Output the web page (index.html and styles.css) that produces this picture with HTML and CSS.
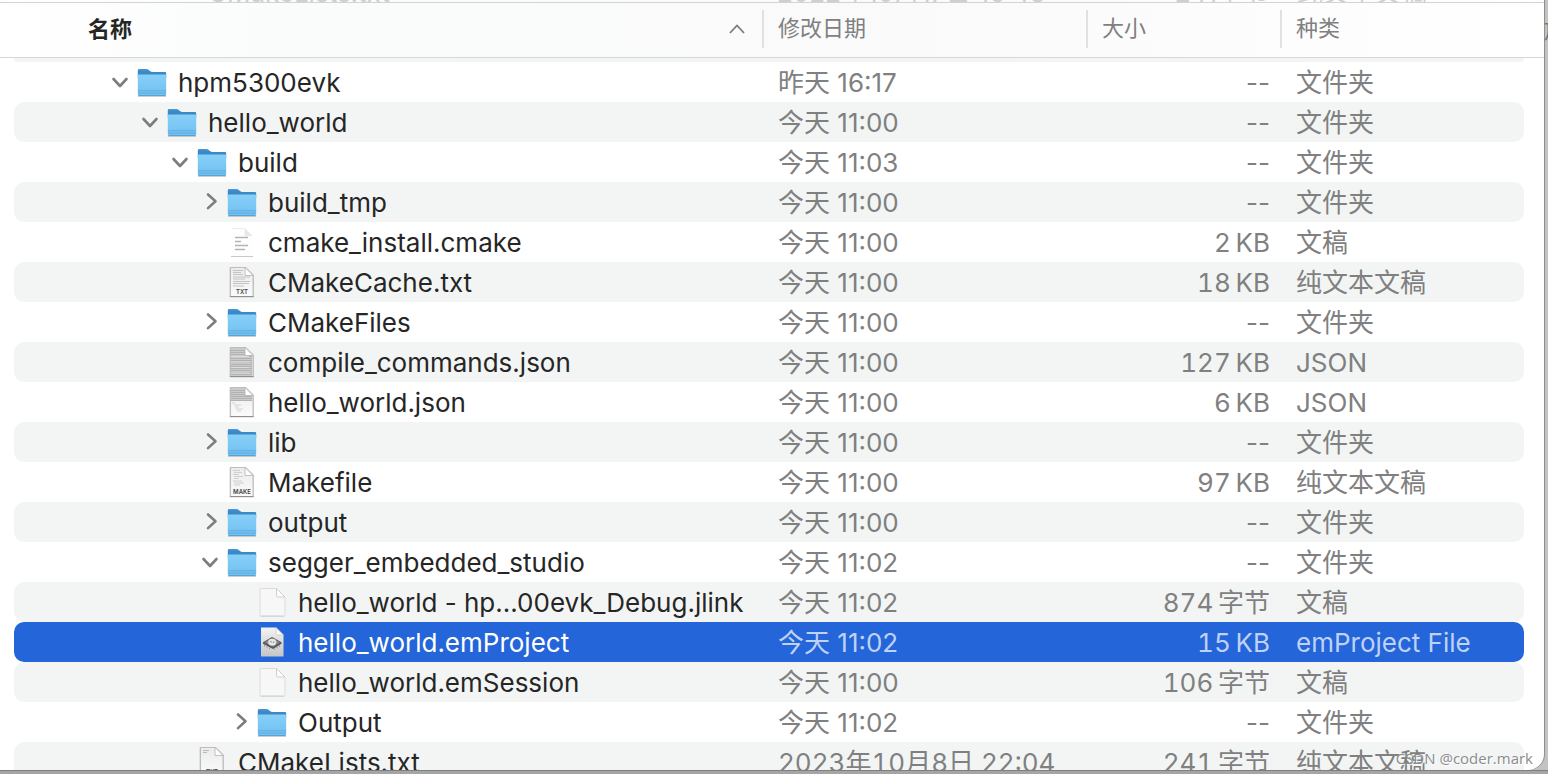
FILE: index.html
```html
<!DOCTYPE html>
<html lang="zh-CN">
<head>
    <meta charset="UTF-8">
    <meta name="viewport" content="width=device-width, initial-scale=1.0">
    <title>hpm5300evk</title>
    <link rel="stylesheet" href="styles.css">
</head>
<body>

<!-- Icon set -->
<svg class="defs" aria-hidden="true">
    <defs>
        <linearGradient id="folderBack" x1="0" y1="0" x2="0" y2="1">
            <stop offset="0" stop-color="#4a9bd6"/>
            <stop offset="0.3" stop-color="#3a88c6"/>
        </linearGradient>
        <linearGradient id="folderFront" x1="0" y1="0" x2="0" y2="1">
            <stop offset="0" stop-color="#86d0f8"/>
            <stop offset="1" stop-color="#72bff0"/>
        </linearGradient>
        <linearGradient id="paper" x1="0" y1="0" x2="0" y2="1">
            <stop offset="0" stop-color="#ececec"/>
            <stop offset="1" stop-color="#fbfbfb"/>
        </linearGradient>
        <linearGradient id="silver" x1="0" y1="0" x2="0" y2="1">
            <stop offset="0" stop-color="#f3f3f3"/>
            <stop offset="1" stop-color="#c3c5c8"/>
        </linearGradient>
        <pattern id="dense" width="5" height="2" patternUnits="userSpaceOnUse">
            <path d="M0 0.5h5" stroke="#b2b2b2" stroke-width="1"/>
        </pattern>

        <symbol id="folder" viewBox="0 0 32 32">
            <path d="M2 29.5h28v1.2H2z" fill="#8b9299" opacity="0.6"/>
            <path d="M1.8 4.2Q1.8 3 3 3h7.5q1.2 0 2 0.8l1.4 1.3q0.9 0.8 2 0.8h13q1.3 0 1.3 1.2V12H1.8z" fill="url(#folderBack)"/>
            <path d="M1.8 9.6Q1.8 8.6 3 8.6h26q1.2 0 1.2 1v18.6q0 1.6-1.4 1.6H3.2q-1.4 0-1.4-1.6z" fill="url(#folderFront)"/>
            <path d="M2 24.7h28M2 27h28" stroke="#4f9ed3" stroke-width="0.8" opacity="0.75"/>
            <path d="M2.5 29.5h27" stroke="#4b9bd1" stroke-width="0.8"/>
        </symbol>

        <symbol id="sheet" viewBox="0 0 32 32">
            <path d="M3.5 1.5h16.500l8 8v22H3.500z" fill="#777777" opacity="0.3"/>
            <path d="M4.5 1.5h15.500l7 7v22h-22.500z" fill="url(#paper)" stroke="#b3b3b3" stroke-width="0.8"/>
            <path d="M4 30.500h23.500" stroke="#8f8f8f"/>
        </symbol>
        <symbol id="fold" viewBox="0 0 32 32">
            <path d="M19 1.500l8 8h-8z" fill="#ffffff" stroke="#b3b3b3" stroke-width="0.8"/>
        </symbol>

        <symbol id="doc" viewBox="0 0 32 32">
            <path d="M5.500 2h14l7 7v21H5.500z" fill="#fefefe"/>
            <path d="M5.500 2.500h13" stroke="#ececec"/>
            <path d="M18.500 2l8 8h-6q-2 0-2-2z" fill="#e7e7e7"/>
            <path d="M5 30.500h22" stroke="#c9c9c9" stroke-width="1"/>
            <path d="M9 11.500h13M9 15.500h6M9 19.500h13M9 23.500h10" stroke="#b4b4b4" stroke-width="1.300"/>
        </symbol>

        <symbol id="txt" viewBox="0 0 32 32">
            <use href="#sheet"/>
            <path d="M7 4.500h10M7 6.500h8M7 8.500h10M7 11h17M7 13h12M7 15.500h17M7 17.500h16M7 20h11" stroke="#bdbdbd" stroke-width="0.900"/>
            <use href="#fold"/>
            <text x="16" y="28" class="badge">TXT</text>
        </symbol>

        <symbol id="lists" viewBox="0 0 32 32">
            <use href="#sheet"/>
            <path d="M7 4.500h6M7 6.500h4" stroke="#b2b2b2" stroke-width="0.900"/>
            <use href="#fold"/>
            <text x="16" y="28" class="badge">TXT</text>
        </symbol>

        <symbol id="make" viewBox="0 0 32 32">
            <use href="#sheet"/>
            <path d="M7 4.500h7M8 6.500h8M7 8.500h6M8 10.500h9M8 12.500h5M7 15h9M8 17h10M8 19h6" stroke="#cccccc" stroke-width="0.900"/>
            <use href="#fold"/>
            <text x="16" y="28" class="badge">MAKE</text>
        </symbol>

        <symbol id="jsonFull" viewBox="0 0 32 32">
            <use href="#sheet"/>
            <path d="M5 2h14l7.500 7.500v20.500H5z" fill="#cbcbcb"/>
            <path d="M5 3h14v6h7v21H5z" fill="url(#dense)"/>
            <path d="M5 10.500h18M5 16h19M5 21.500h18M5 27h19" stroke="#dddddd" stroke-width="1.200"/>
            <use href="#fold"/>
        </symbol>

        <symbol id="jsonHalf" viewBox="0 0 32 32">
            <use href="#sheet"/>
            <path d="M5 2h14l7.500 7.500v5.500H5z" fill="#cbcbcb"/>
            <path d="M5 3h14v6h7v6H5z" fill="url(#dense)"/>
            <path d="M6 17h3M8 19h7M9 21h4M10 23h7M11 25h4" stroke="#d0d0d0" stroke-width="0.900"/>
            <use href="#fold"/>
        </symbol>

        <symbol id="blank" viewBox="0 0 32 32">
            <path d="M4 2.500h16.500l8.500 8.500v17.500q0 1.500-1.500 1.500h-22q-1.500 0-1.500-1.500z" fill="#f7f7f7" stroke="#dcdcdc"/>
            <path d="M20.500 2.500l8.500 8.500h-7q-1.500 0-1.500-1.500z" fill="#fdfdfd" stroke="#cfcfcf"/>
            <path d="M4.500 30.200h24" stroke="#c9c9c9" stroke-width="0.800"/>
        </symbol>

        <symbol id="chip" viewBox="0 0 32 32">
            <path d="M5 1.500h15l7.500 7.500v21.500H5z" fill="url(#silver)"/>
            <path d="M20 1.500l7.500 7.500h-6q-1.500 0-1.500-1.500z" fill="#fafafa" stroke="#bdbdbd" stroke-width="0.600"/>
            <path d="M7 16.200l9-5.200 9.500 5.200v1.600l-8.500 5.200-10-5.200z" fill="#5b5957"/>
            <path d="M8.500 19v1.400M11 20.200v1.500M13.500 21.500v1.500M18.500 22.500v1.300M21 21v1.300M23.500 19.500v1.300" stroke="#a48460" stroke-width="0.900"/>
            <path d="M8.500 16.200l7.500-4.200 8 4.200-7 4.500z" fill="#8a8b8d"/>
            <ellipse cx="16.200" cy="16.200" rx="4" ry="3.400" fill="#e6e7e8"/>
            <circle cx="15" cy="15.800" r="0.700" fill="#777777"/>
            <circle cx="17.600" cy="16.200" r="0.700" fill="#777777"/>
        </symbol>

        <symbol id="down" viewBox="0 0 32 32">
            <path d="M9.500 13l6.500 7 6.500-7" class="stroke"/>
        </symbol>
        <symbol id="right" viewBox="0 0 32 32">
            <path d="M14 8.500l7.500 6.800-7.500 6.800" class="stroke"/>
        </symbol>
    </defs>
</svg>

<div class="desktop">
    <main class="window">
        <!-- Row scrolled under the header -->
        <div class="peek">
            <span class="peek-name">CMakeLists.txt</span>
            <span class="peek-date">2022年10月17日 16:48</span>
            <span class="peek-size">241字节</span>
            <span class="peek-kind">纯文本文稿</span>
        </div>

        <table class="files">
            <colgroup>
                <col>
                <col class="col-date">
                <col class="col-size">
                <col class="col-kind">
            </colgroup>
            <thead>
                <tr>
                    <th class="sorted">
                        <button class="sort" type="button">名称
                            <svg width="18" height="12" viewBox="0 0 18 12" aria-hidden="true"><path d="M2 10l7-7.500 7 7.500" fill="none" stroke="#7b7b7b" stroke-width="1.800"/></svg>
                        </button>
                    </th>
                    <th><span class="label">修改日期</span></th>
                    <th><span class="label">大小</span></th>
                    <th><span class="label">种类</span></th>
                </tr>
            </thead>
            <tbody>
                <tr class="cut"><td colspan="4"></td></tr>
                <tr>
                    <td><div class="name level-0"><button class="toggle" type="button" aria-label="折叠"><svg><use href="#down"/></svg></button><svg class="icon"><use href="#folder"/></svg><span>hpm5300evk</span></div></td>
                    <td>昨天 16:17</td><td class="size">--</td><td>文件夹</td>
                </tr>
                <tr>
                    <td><div class="name level-1"><button class="toggle" type="button" aria-label="折叠"><svg><use href="#down"/></svg></button><svg class="icon"><use href="#folder"/></svg><span>hello_world</span></div></td>
                    <td>今天 11:00</td><td class="size">--</td><td>文件夹</td>
                </tr>
                <tr>
                    <td><div class="name level-2"><button class="toggle" type="button" aria-label="折叠"><svg><use href="#down"/></svg></button><svg class="icon"><use href="#folder"/></svg><span>build</span></div></td>
                    <td>今天 11:03</td><td class="size">--</td><td>文件夹</td>
                </tr>
                <tr>
                    <td><div class="name level-3"><button class="toggle" type="button" aria-label="展开"><svg><use href="#right"/></svg></button><svg class="icon"><use href="#folder"/></svg><span>build_tmp</span></div></td>
                    <td>今天 11:00</td><td class="size">--</td><td>文件夹</td>
                </tr>
                <tr>
                    <td><div class="name level-3 leaf"><svg class="icon"><use href="#doc"/></svg><span>cmake_install.cmake</span></div></td>
                    <td>今天 11:00</td><td class="size num">2&#8201;KB</td><td>文稿</td>
                </tr>
                <tr>
                    <td><div class="name level-3 leaf"><svg class="icon"><use href="#txt"/></svg><span>CMakeCache.txt</span></div></td>
                    <td>今天 11:00</td><td class="size num">18&#8201;KB</td><td>纯文本文稿</td>
                </tr>
                <tr>
                    <td><div class="name level-3"><button class="toggle" type="button" aria-label="展开"><svg><use href="#right"/></svg></button><svg class="icon"><use href="#folder"/></svg><span>CMakeFiles</span></div></td>
                    <td>今天 11:00</td><td class="size">--</td><td>文件夹</td>
                </tr>
                <tr>
                    <td><div class="name level-3 leaf"><svg class="icon"><use href="#jsonFull"/></svg><span>compile_commands.json</span></div></td>
                    <td>今天 11:00</td><td class="size num">127&#8201;KB</td><td>JSON</td>
                </tr>
                <tr>
                    <td><div class="name level-3 leaf"><svg class="icon"><use href="#jsonHalf"/></svg><span>hello_world.json</span></div></td>
                    <td>今天 11:00</td><td class="size num">6&#8201;KB</td><td>JSON</td>
                </tr>
                <tr>
                    <td><div class="name level-3"><button class="toggle" type="button" aria-label="展开"><svg><use href="#right"/></svg></button><svg class="icon"><use href="#folder"/></svg><span>lib</span></div></td>
                    <td>今天 11:00</td><td class="size">--</td><td>文件夹</td>
                </tr>
                <tr>
                    <td><div class="name level-3 leaf"><svg class="icon"><use href="#make"/></svg><span>Makefile</span></div></td>
                    <td>今天 11:00</td><td class="size num">97&#8201;KB</td><td>纯文本文稿</td>
                </tr>
                <tr>
                    <td><div class="name level-3"><button class="toggle" type="button" aria-label="展开"><svg><use href="#right"/></svg></button><svg class="icon"><use href="#folder"/></svg><span>output</span></div></td>
                    <td>今天 11:00</td><td class="size">--</td><td>文件夹</td>
                </tr>
                <tr>
                    <td><div class="name level-3"><button class="toggle" type="button" aria-label="折叠"><svg><use href="#down"/></svg></button><svg class="icon"><use href="#folder"/></svg><span>segger_embedded_studio</span></div></td>
                    <td>今天 11:02</td><td class="size">--</td><td>文件夹</td>
                </tr>
                <tr>
                    <td><div class="name level-4 leaf"><svg class="icon"><use href="#blank"/></svg><span>hello_world - hp...00evk_Debug.jlink</span></div></td>
                    <td>今天 11:02</td><td class="size num">874&#8201;字节</td><td>文稿</td>
                </tr>
                <tr class="selected">
                    <td><div class="name level-4 leaf"><svg class="icon"><use href="#chip"/></svg><span>hello_world.emProject</span></div></td>
                    <td>今天 11:02</td><td class="size num">15&#8201;KB</td><td>emProject File</td>
                </tr>
                <tr>
                    <td><div class="name level-4 leaf"><svg class="icon"><use href="#blank"/></svg><span>hello_world.emSession</span></div></td>
                    <td>今天 11:00</td><td class="size num">106&#8201;字节</td><td>文稿</td>
                </tr>
                <tr>
                    <td><div class="name level-4"><button class="toggle" type="button" aria-label="展开"><svg><use href="#right"/></svg></button><svg class="icon"><use href="#folder"/></svg><span>Output</span></div></td>
                    <td>今天 11:02</td><td class="size">--</td><td>文件夹</td>
                </tr>
                <tr>
                    <td><div class="name level-2 leaf"><svg class="icon"><use href="#lists"/></svg><span>CMakeLists.txt</span></div></td>
                    <td class="num">2023年10月8日 22:04</td><td class="size num">241&#8201;字节</td><td>纯文本文稿</td>
                </tr>
            </tbody>
        </table>
    </main>
    <aside class="behind">放</aside>
</div>

<div class="watermark">CSDN @coder.mark</div>

</body>
</html>
```
FILE: styles.css
```css
* {
    box-sizing: border-box;
}
body {
    margin: 0;
    height: 100vh;
    overflow: hidden;
    background-color: #a5a5a5;
    font-family: Inter, "Noto Sans CJK SC", sans-serif;
    font-size: 26px;
    color: #7f807f;
}
button {
    border: 0;
    padding: 0;
    background: none;
    font: inherit;
    color: inherit;
}
.defs {
    display: block;
    width: 0;
    height: 0;
}
.desktop {
    display: flex;
    height: calc(100vh - 4px);
    background-color: #c3c3c3;
    box-shadow: 0 1px 0 #7f7f7f;
}
.window {
    flex: 1;
    min-width: 0;
    overflow: hidden;
    padding: 0 20px 0 14px;
    border-bottom-right-radius: 16px;
    background: linear-gradient(#d6d7d7, #d6d7d7) 0 57px / 100% 1px no-repeat,
        linear-gradient(#d2d3d3, #d2d3d3) 0 2px / 100% 1px no-repeat,
        linear-gradient(90deg, #ffffff, #fafbfb 20%, #fafafa 60%, #ffffff) 0 0 / 100% 57px no-repeat,
        #ffffff;
    box-shadow: 1px 0 0 #8f8f8f;
}

/* Bottoms of the glyphs that show above the header */
.peek {
    display: flex;
    align-items: flex-end;
    height: 2px;
    overflow: hidden;
    line-height: 18px;
    color: #cfcfcf;
    white-space: nowrap;
}
.peek-name {
    flex: 1;
    padding-left: 194px;
}
.peek-date {
    width: 358px;
}
.peek-size {
    width: 146px;
    text-align: right;
    padding-right: 12px;
}
.peek-kind {
    width: 243px;
    padding-left: 16px;
}

.files {
    width: 100%;
    table-layout: fixed;
    border-collapse: separate;
    border-spacing: 0;
}
.col-date {
    width: 324px;
}
.col-size {
    width: 194px;
}
.col-kind {
    width: 244px;
}
th {
    height: 56px;
    padding: 0 0 2px;
    font-size: 22px;
    font-weight: normal;
    text-align: left;
}
.label {
    display: block;
    height: 38px;
    padding-left: 14px;
    border-left: 2px solid #e0e1e1;
    line-height: 36px;
}
.sort {
    display: flex;
    align-items: center;
    justify-content: space-between;
    width: 100%;
    padding: 0 16px 0 74px;
    font-weight: bold;
    line-height: 36px;
    color: #262626;
}
td {
    height: 40px;
    padding: 2px 0 0 16px;
    line-height: 38px;
    white-space: nowrap;
    overflow: hidden;
}
td:first-child {
    padding: 0;
    border-radius: 10px 0 0 10px;
}
td:last-child {
    border-radius: 0 10px 10px 0;
}
tbody tr:nth-child(odd) td {
    background-color: #f3f5f5;
}
.cut td {
    height: 4px;
}
.cut td:first-child {
    border-radius: 0 0 10px 10px;
}
tbody .selected td {
    background-color: #2465da;
    color: #bfd2f6;
}
.size {
    padding-right: 10px;
    text-align: right;
}
.num {
    font-variant-numeric: tabular-nums;
}

.name {
    display: flex;
    align-items: center;
    height: 40px;
    color: #262626;
}
.selected .name {
    color: #ffffff;
}
.name span {
    padding: 2px 0 0 10px;
}
.level-0 {
    padding-left: 90px;
}
.level-1 {
    padding-left: 120px;
}
.level-2 {
    padding-left: 150px;
}
.level-3 {
    padding-left: 180px;
}
.level-4 {
    padding-left: 210px;
}
.leaf::before {
    content: "";
    width: 32px;
}
.toggle,
.toggle svg,
.icon {
    display: block;
    flex: none;
    width: 32px;
    height: 32px;
}
.stroke {
    fill: none;
    stroke: #7d7d7d;
    stroke-width: 2.6;
    stroke-linecap: round;
    stroke-linejoin: round;
}
.badge {
    font-size: 6px;
    font-weight: 600;
    text-anchor: middle;
    fill: #444444;
}

.behind {
    width: 4px;
    overflow: hidden;
    padding-top: 12px;
    font-size: 22px;
    color: #777777;
}
.watermark {
    position: absolute;
    right: 15px;
    bottom: 6px;
    font-family: "Open Sans", "Noto Sans", sans-serif;
    font-size: 15px;
    line-height: 20px;
    color: #8c8c8c;
    text-shadow: 1px 1px 1px #ffffff;
}
```
